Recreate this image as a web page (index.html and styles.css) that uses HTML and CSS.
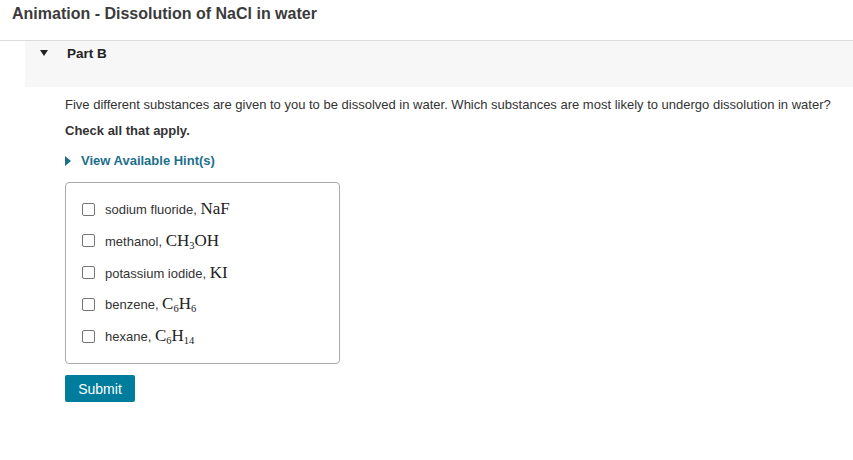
FILE: index.html
```html
<!DOCTYPE html>
<html>
<head>
<meta charset="utf-8">
<link rel="stylesheet" href="styles.css">
</head>
<body>
<div class="page">
  <h1 class="title">Animation - Dissolution of NaCl in water</h1>
  <div class="part">
    <div class="part-head">
      <span class="tri-down"></span>
      <span class="part-label">Part B</span>
    </div>
  </div>
  <div class="content">
    <p class="question">Five different substances are given to you to be dissolved in water. Which substances are most likely to undergo dissolution in water?</p>
    <p class="instr">Check all that apply.</p>
    <div class="hint"><span class="tri-right"></span><span>View Available Hint(s)</span></div>
    <div class="choices">
      <label class="choice"><span class="box"></span><span>sodium fluoride, <span class="m">NaF</span></span></label>
      <label class="choice"><span class="box"></span><span>methanol, <span class="m">CH<sub>3</sub>OH</span></span></label>
      <label class="choice"><span class="box"></span><span>potassium iodide, <span class="m">KI</span></span></label>
      <label class="choice"><span class="box"></span><span>benzene, <span class="m">C<sub>6</sub>H<sub>6</sub></span></span></label>
      <label class="choice"><span class="box"></span><span>hexane, <span class="m">C<sub>6</sub>H<sub>14</sub></span></span></label>
    </div>
    <button class="submit">Submit</button>
  </div>
</div>
</body>
</html>
```

FILE: styles.css
```css
* { box-sizing: border-box; }
html, body { margin: 0; padding: 0; background: #fff; }
body { font-family: "Liberation Sans", Arial, sans-serif; color: #333; }
.page { width: 853px; }
.title {
  margin: 0;
  padding: 5px 0 0 12px;
  height: 41px;
  font-size: 16px;
  font-weight: bold;
  color: #3b3b3b;
  border-bottom: 1px solid #dcdcdc;
}
.part {
  margin-left: 25px;
  height: 46px;
  background: #f7f7f7;
}
.part-head {
  display: flex;
  align-items: center;
  padding: 4px 0 0 15px;
  height: 20px;
}
.tri-down {
  width: 0; height: 0;
  border-left: 4.5px solid transparent;
  border-right: 4.5px solid transparent;
  border-top: 6px solid #222;
  margin-right: 19px;
}
.part-label { font-size: 13.5px; font-weight: bold; color: #222; }
.content { padding: 10px 0 0 65px; }
.question { margin: 0; font-size: 13px; line-height: 15px; color: #333; }
.instr { margin: 11px 0 0; font-size: 13px; font-weight: bold; line-height: 15px; color: #333; }
.hint {
  margin-top: 15px;
  display: flex;
  align-items: center;
  font-size: 13px;
  font-weight: bold;
  color: #1e6f8c;
  line-height: 15px;
}
.tri-right {
  width: 0; height: 0;
  border-top: 5px solid transparent;
  border-bottom: 5px solid transparent;
  border-left: 6px solid #1e6f8c;
  margin-right: 10px;
}
.choices {
  margin-top: 14px;
  width: 275px;
  height: 182px;
  border: 1px solid #aaa;
  border-radius: 4px;
  padding: 16px 0 0 16px;
  display: flex;
  flex-direction: column;
  gap: 11.75px;
}
.choice {
  display: flex;
  align-items: center;
  height: 20px;
  font-size: 13px;
  color: #333;
}
.box {
  width: 13px; height: 13px;
  border: 1px solid #767676;
  border-radius: 2px;
  background: #fff;
  margin-right: 10px;
  flex: none;
}
.m { font-family: "Liberation Serif", "Times New Roman", serif; font-size: 17px; color: #222; }
.m sub { font-size: 10.5px; vertical-align: -3px; line-height: 0; }
.submit {
  margin-top: 11px;
  width: 70px;
  height: 27px;
  background: #007c9c;
  color: #fff;
  border: none;
  border-radius: 2px;
  font-family: "Liberation Sans", Arial, sans-serif;
  font-size: 14px;
  padding: 0;
  display: block;
}
```
